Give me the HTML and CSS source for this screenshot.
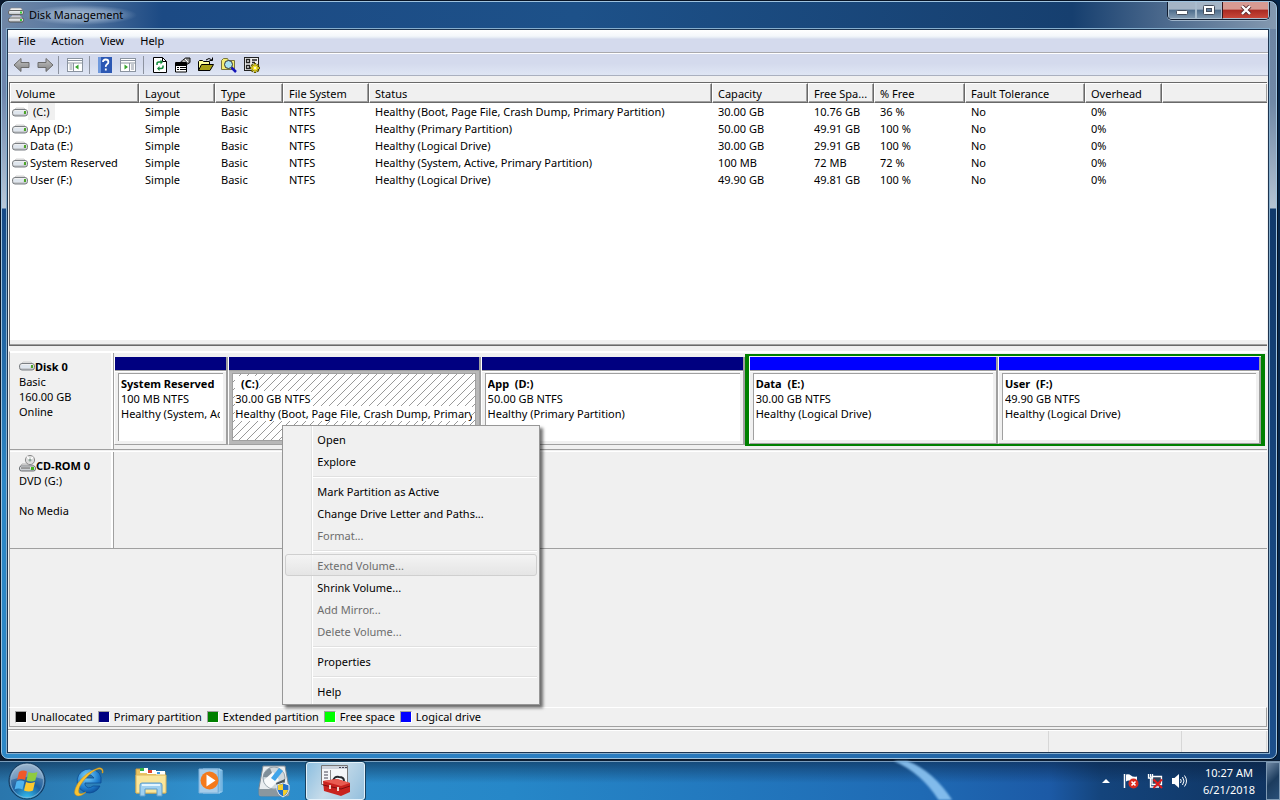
FILE: index.html
```
<!DOCTYPE html>
<html lang="en">
<head>
<meta charset="utf-8">
<title>Disk Management</title>
<link rel="stylesheet" href="styles.css">
</head>
<body>
<svg class="defs" aria-hidden="true">
  <defs>
    <linearGradient id="metal" x1="0" y1="0" x2="0" y2="1"><stop offset="0" stop-color="#fafafa"/><stop offset="1" stop-color="#b9bec4"/></linearGradient>
    <linearGradient id="arrow" x1="0" y1="0" x2="0" y2="1"><stop offset="0" stop-color="#c4c4c4"/><stop offset="1" stop-color="#808080"/></linearGradient>
    <symbol id="drive" viewBox="0 0 16 10">
      <path d="M4 1h8l3 3H1z" fill="#e9e9e9" stroke="#b8b8b8" stroke-width=".6"/>
      <rect x=".5" y="2.500" width="15" height="6.500" rx="2.500" fill="url(#metal)" stroke="#7b7f83"/>
      <rect x="2" y="4" width="9" height="3" fill="#dfe6ee"/>
      <rect x="12" y="4" width="2" height="3" fill="#4ca52a"/>
    </symbol>
    <symbol id="cdrom" viewBox="0 0 17 17">
      <circle cx="11" cy="5" r="4.600" fill="#dcdcdc" stroke="#8a8a8a"/>
      <path d="M11 5L8 1.500M11 5l3-3" stroke="#fff" stroke-width="1.500"/>
      <circle cx="11" cy="5" r="1.500" fill="#8fa39a"/>
      <path d="M3 9h5l2 1h4l2 2H1z" fill="#e6e6e6" stroke="#8a8a8a" stroke-width=".6"/>
      <rect x=".5" y="11" width="16" height="5" rx="2" fill="url(#metal)" stroke="#6f7377"/>
      <path d="M2 13h9" stroke="#555"/><rect x="12" y="12" width="3" height="3" fill="#3eb51c"/>
    </symbol>
  </defs>
</svg>

<main class="window">
  <header class="titlebar">
    <svg class="title-icon" width="16" height="16" viewBox="0 0 16 16" aria-hidden="true"><path d="M3 1h10l2 3H1z" fill="#eee" stroke="#888" stroke-width=".6"/><rect x=".5" y="3.500" width="15" height="4" rx="1.500" fill="url(#metal)" stroke="#666"/><path d="M4 8h8v2H4z" fill="#aab"/><path d="M3 9.500h10l2 2H1z" fill="#eee"/><rect x=".5" y="11" width="15" height="4" rx="1.500" fill="url(#metal)" stroke="#555"/><path d="M12 4.500h2v2h-2zM12 12h2v2h-2z" fill="#3c3"/></svg>
    <h1 class="title">Disk Management</h1>
    <div class="caption">
      <button class="cap cap-min" aria-label="Minimize"><svg width="12" height="6" viewBox="0 0 12 6"><rect x=".5" y="1.500" width="11" height="4" rx="1" fill="#fff" stroke="#444c5a"/></svg></button>
      <button class="cap cap-max" aria-label="Maximize"><svg width="12" height="10" viewBox="0 0 12 10"><rect x=".5" y=".5" width="11" height="9" rx="1" fill="#fff" stroke="#444c5a"/><rect x="3.500" y="3.500" width="5" height="3" fill="#5f7c9c" stroke="#444c5a"/></svg></button>
      <button class="cap cap-close" aria-label="Close"><svg width="12" height="10" viewBox="0 0 12 10"><path d="M2 1l8 8M10 1l-8 8" stroke="#5a2a2e" stroke-width="4"/><path d="M2 1l8 8M10 1l-8 8" stroke="#fff" stroke-width="2.400"/></svg></button>
    </div>
  </header>

  <div class="client">
    <nav class="menubar">
      <button>File</button><button>Action</button><button>View</button><button>Help</button>
    </nav>
    <div class="toolbar">
      <button aria-label="Back"><svg width="18" height="16" viewBox="0 0 18 16"><path d="M1 8l7-6.500v4h8v5H8v4z" fill="url(#arrow)" stroke="#6b6b6b"/></svg></button>
      <button aria-label="Forward"><svg width="18" height="16" viewBox="0 0 18 16"><path d="M17 8l-7-6.500v4H2v5h8v4z" fill="url(#arrow)" stroke="#6b6b6b"/></svg></button>
      <span class="tool-sep first"></span>
      <button aria-label="Show console tree"><svg width="16" height="16" viewBox="0 0 16 16"><rect x=".5" y="1.500" width="15" height="13" fill="#fff" stroke="#8b94a0"/><path d="M1 3.500h14M1 6h14" stroke="#8b94a0"/><path d="M12 2.500h3" stroke="#fff"/><path d="M2.500 8h3M2.500 10h3M2.500 12h3" stroke="#8b94a0"/><path d="M6.500 6v8" stroke="#8b94a0"/><path d="M11.500 7.500v5L8 10z" fill="#37a52c"/></svg></button>
      <span class="tool-sep wide"></span>
      <button aria-label="Help"><svg width="14" height="16" viewBox="0 0 14 16"><rect width="14" height="16" fill="#2c58b4"/><path d="M0 0h3v16H0z" fill="#6e98dd"/><path d="M5 5q0-2.500 2.700-2.500T10.400 5q0 1.300-1.400 2.200T7.800 9.800M7.800 11.500v2" fill="none" stroke="#fff" stroke-width="1.800"/></svg></button>
      <button aria-label="Show action pane"><svg width="16" height="16" viewBox="0 0 16 16"><rect x=".5" y="1.500" width="15" height="13" fill="#fff" stroke="#8b94a0"/><path d="M1 3.500h14M1 6h14" stroke="#8b94a0"/><path d="M12 2.500h3" stroke="#fff"/><path d="M11 8h3M11 10h3M11 12h3" stroke="#8b94a0"/><path d="M9.500 6v8" stroke="#8b94a0"/><path d="M4.500 7.500v5L8 10z" fill="#37a52c"/></svg></button>
      <span class="tool-sep"></span>
      <button aria-label="Refresh"><svg width="14" height="16" viewBox="0 0 14 16"><path d="M.5.5h9l4 4v11H.5z" fill="#fff" stroke="#000"/><path d="M9.500.5v4h4" fill="none" stroke="#000"/><path d="M4 8V6.500Q4 5 6 5h2M10 8.500V10q0 1.500-2 1.500H6" fill="none" stroke="#10893a" stroke-width="1.500"/><path d="M7.500 2.500L10 5 7.500 7.500zM6.500 9L4 11.500 6.500 14z" fill="#10893a"/></svg></button>
      <button aria-label="Properties"><svg width="16" height="16" viewBox="0 0 16 16"><path d="M5.500 5l5-4h4.500v4.500L11 8H6z" fill="#8d8d8d" stroke="#111"/><path d="M8 3.500l3 3M10 2l3 3" stroke="#fff"/><path d="M.5 5.500h11v9.500H.5z" fill="#fff" stroke="#000"/><path d="M1 5h10v4H1z"/><path d="M2 10.500h2M5 10.500h6M2 12.500h2M5 12.500h6" stroke="#000"/></svg></button>
      <button aria-label="Open"><svg width="16" height="16" viewBox="0 0 16 16"><path d="M.5 13.500v-9l1-1h3l1 1h6v3" fill="#ffff9c" stroke="#000"/><path d="M.5 13.500l3-6h12l-3.500 6z" fill="#a8a018" stroke="#000"/><path d="M8 3q3-3 6 0M14.500.5v3h-3" fill="none" stroke="#000"/></svg></button>
      <button aria-label="Find"><svg width="16" height="16" viewBox="0 0 16 16"><path d="M.5 12.500v-9l2-2h4l1 2h6v9z" fill="#f3ed71" stroke="#77753c"/><circle cx="7.500" cy="7.500" r="4" fill="#a8e3f2" stroke="#333"/><path d="M10.500 10.500l4.500 4.500" stroke="#1414b8" stroke-width="2.500"/></svg></button>
      <button aria-label="Settings"><svg width="16" height="16" viewBox="0 0 16 16"><rect x=".5" y=".5" width="14" height="13" fill="#eee" stroke="#222"/><path d="M2.500 2.500h3v3h-3zM2.500 8.500h3v3h-3z" fill="#fff" stroke="#222" stroke-width="1.300"/><path d="M8 3h5M8 5.500h3" stroke="#222" stroke-width="1.500"/><path d="M11 6v10M6 11h10M7.500 7.500l7 7M14.500 7.500l-7 7" stroke="#5e5700" stroke-width="2.400"/><path d="M11 7v8M7 11h8M8.500 8.500l5 5M13.500 8.500l-5 5" stroke="#f5e52c" stroke-width="1.400"/><circle cx="11" cy="11" r="1" fill="#fff"/></svg></button>
    </div>

    <section class="volumes" aria-label="Volumes">
      <table class="volume-table">
        <colgroup><col class="c-volume"><col class="c-layout"><col class="c-type"><col class="c-fs"><col class="c-status"><col class="c-cap"><col class="c-free"><col class="c-pct"><col class="c-fault"><col class="c-over"><col></colgroup>
        <thead><tr><th>Volume</th><th>Layout</th><th>Type</th><th>File System</th><th>Status</th><th>Capacity</th><th>Free Spa...</th><th>% Free</th><th>Fault Tolerance</th><th>Overhead</th><th></th></tr></thead>
        <tbody>
          <tr><td class="vol"><svg class="drive"><use href="#drive"/></svg><span class="vol-name selected">(C:)</span></td><td>Simple</td><td>Basic</td><td>NTFS</td><td>Healthy (Boot, Page File, Crash Dump, Primary Partition)</td><td>30.00 GB</td><td>10.76 GB</td><td>36 %</td><td>No</td><td>0%</td><td></td></tr>
          <tr><td class="vol"><svg class="drive"><use href="#drive"/></svg><span class="vol-name">App (D:)</span></td><td>Simple</td><td>Basic</td><td>NTFS</td><td>Healthy (Primary Partition)</td><td>50.00 GB</td><td>49.91 GB</td><td>100 %</td><td>No</td><td>0%</td><td></td></tr>
          <tr><td class="vol"><svg class="drive"><use href="#drive"/></svg><span class="vol-name">Data (E:)</span></td><td>Simple</td><td>Basic</td><td>NTFS</td><td>Healthy (Logical Drive)</td><td>30.00 GB</td><td>29.91 GB</td><td>100 %</td><td>No</td><td>0%</td><td></td></tr>
          <tr><td class="vol"><svg class="drive"><use href="#drive"/></svg><span class="vol-name">System Reserved</span></td><td>Simple</td><td>Basic</td><td>NTFS</td><td>Healthy (System, Active, Primary Partition)</td><td>100 MB</td><td>72 MB</td><td>72 %</td><td>No</td><td>0%</td><td></td></tr>
          <tr><td class="vol"><svg class="drive"><use href="#drive"/></svg><span class="vol-name">User (F:)</span></td><td>Simple</td><td>Basic</td><td>NTFS</td><td>Healthy (Logical Drive)</td><td>49.90 GB</td><td>49.81 GB</td><td>100 %</td><td>No</td><td>0%</td><td></td></tr>
        </tbody>
      </table>
    </section>

    <section class="disks" aria-label="Disks">
      <div class="disk">
        <div class="disk-info">
          <p class="disk-name"><svg class="drive"><use href="#drive"/></svg><b>Disk 0</b></p>
          <p>Basic</p><p>160.00 GB</p><p>Online</p>
        </div>
        <div class="disk-map">
          <div class="part p-sys"><div class="bar"></div><div class="box"><div class="box-in"><p><b>System Reserved</b></p><p>100 MB NTFS</p><p>Healthy (System, Active, Primary Partition)</p></div></div></div>
          <div class="part p-c active"><div class="bar"></div><div class="box"><div class="box-in"><p><b>&nbsp; (C:)</b></p><p><span>30.00 GB NTFS</span></p><p><span>Healthy (Boot, Page File, Crash Dump, Primary Partition)</span></p></div></div>
            <div class="menu" role="menu">
              <button role="menuitem">Open</button>
              <button role="menuitem">Explore</button>
              <hr>
              <button role="menuitem">Mark Partition as Active</button>
              <button role="menuitem">Change Drive Letter and Paths...</button>
              <button role="menuitem" disabled>Format...</button>
              <hr>
              <button role="menuitem" class="hot" disabled>Extend Volume...</button>
              <button role="menuitem">Shrink Volume...</button>
              <button role="menuitem" disabled>Add Mirror...</button>
              <button role="menuitem" disabled>Delete Volume...</button>
              <hr>
              <button role="menuitem">Properties</button>
              <hr>
              <button role="menuitem">Help</button>
            </div>
          </div>
          <div class="part p-d"><div class="bar"></div><div class="box"><div class="box-in"><p><b>App&nbsp; (D:)</b></p><p>50.00 GB NTFS</p><p>Healthy (Primary Partition)</p></div></div></div>
          <div class="extended">
            <div class="part logical p-e"><div class="bar"></div><div class="box"><div class="box-in"><p><b>Data&nbsp; (E:)</b></p><p>30.00 GB NTFS</p><p>Healthy (Logical Drive)</p></div></div></div>
            <div class="part logical p-f"><div class="bar"></div><div class="box"><div class="box-in"><p><b>User&nbsp; (F:)</b></p><p>49.90 GB NTFS</p><p>Healthy (Logical Drive)</p></div></div></div>
          </div>
        </div>
      </div>
      <div class="disk">
        <div class="disk-info">
          <p class="disk-name"><svg class="cdrom"><use href="#cdrom"/></svg><b>CD-ROM 0</b></p>
          <p>DVD (G:)</p><p>&nbsp;</p><p>No Media</p>
        </div>
        <div class="disk-map"></div>
      </div>
    </section>

    <ul class="legend">
      <li><i class="sw black"></i>Unallocated</li>
      <li><i class="sw navy"></i>Primary partition</li>
      <li><i class="sw green"></i>Extended partition</li>
      <li><i class="sw lime"></i>Free space</li>
      <li><i class="sw blue"></i>Logical drive</li>
    </ul>
    <footer class="statusbar"><span class="st-main"></span><span class="st-mid"></span><span class="st-end"></span></footer>
  </div>
</main>

<footer class="taskbar">
  <svg class="streak" viewBox="0 0 80 40" aria-hidden="true"><path d="M10 0Q38 12 56 40h14Q50 10 24 0z" fill="#8cc4f2" opacity=".9"/></svg>
  <button class="start" aria-label="Start"><svg width="38" height="38" viewBox="0 0 38 38">
    <defs><radialGradient id="orb" cx=".5" cy="1" r="1"><stop offset="0" stop-color="#35c6f5"/><stop offset=".45" stop-color="#1c5e9e"/><stop offset="1" stop-color="#7f9fbd"/></radialGradient></defs>
    <circle cx="19" cy="19" r="18" fill="url(#orb)" stroke="#123556"/><circle cx="19" cy="19" r="16.500" fill="none" stroke="#8db4d2" opacity=".7"/>
    <path d="M3 18a16 16 0 0132-1Q19 12 3 18z" fill="#fff" opacity=".25"/>
    <path d="M11 10q4-2.500 8-.5l-2 8.500q-4-2-8 0z" fill="#f0582a"/><path d="M20.500 10q4 2 9 0l-2.200 8.500q-4 2-8.800 0z" fill="#8fcb3e"/><path d="M8.500 19.500q4-2 8 0l-2 8q-4-2-8 0z" fill="#4fb3f0"/><path d="M18 20q4 2 9 0l-2 8.500q-4 2-9 0z" fill="#fdc92f"/></svg></button>
  <button class="task" aria-label="Internet Explorer"><svg width="34" height="34" viewBox="0 0 34 34">
    <defs><radialGradient id="ie" cx=".4" cy=".3" r=".8"><stop offset="0" stop-color="#7cd3fb"/><stop offset=".6" stop-color="#2180cf"/><stop offset="1" stop-color="#0b438c"/></radialGradient></defs>
    <path d="M17.500 5A12 12 0 1028 22h-7q-5 4-8-1v-2h16Q31 6 17.500 5zM13 14q4-7 9 0z" fill="url(#ie)" fill-rule="evenodd" stroke="#0d4e96" stroke-width=".8"/>
    <path d="M31 9q1-6-5-5Q14 8 6 19-1 31 6 32q4 0 8-4-5 3-7 1-2-5 6-14Q21 6 27 5q4 0 3 4z" fill="#f8c332" stroke="#c98a12" stroke-width=".5"/></svg></button>
  <button class="task" aria-label="Windows Explorer"><svg width="34" height="32" viewBox="0 0 34 32"><path d="M2 4h9l2 3h18v21H2z" fill="#eac565" stroke="#c79a3c"/><path d="M6 3h8v5H6z" fill="#fff"/><path d="M6 3h4v3H6z" fill="#30b045"/><path d="M13 5h9v4h-9z" fill="#fff"/><path d="M14 5h4v3h-4z" fill="#df4431"/><path d="M22 6h9v4h-9z" fill="#fff"/><path d="M23 7h3v2h-3z" fill="#3e9be0"/><path d="M2 10h30v18H2z" fill="#fae69b" stroke="#ddb65a"/><path d="M6 31V20q0-2 2-2h18q2 0 2 2v11h-5v-7H11v7z" fill="#9fd0f0" stroke="#5c9ccb"/><path d="M8 19h18v2H8z" fill="#e3f5ff"/></svg></button>
  <button class="task" aria-label="Media Player"><svg width="30" height="28" viewBox="0 0 30 28"><path d="M8 3h16v22H8z" fill="#4c9ad3" stroke="#9fd0f0"/><path d="M5 2h17v24H5z" fill="#6cb0de" stroke="#a9d6f2"/><path d="M1 2h19v24H1z" fill="#a7cdea" stroke="#7db2dc"/><circle cx="11.500" cy="13.500" r="9" fill="#f47a1c"/><path d="M8.500 7.500v12l9-6z" fill="#fff"/></svg></button>
  <button class="task" aria-label="Partition tool"><svg width="34" height="34" viewBox="0 0 34 34"><path d="M5 2h22l4 22v6q0 2-2 2H3q-2 0-2-2v-6z" fill="#e9edf0" stroke="#7b8791"/><path d="M1 25h30v5q0 2-2 2H3q-2 0-2-2z" fill="#8b979f"/><circle cx="16" cy="14" r="11" fill="#cfd8de" stroke="#9aa5ad"/><path d="M16 14L5 13q1-6 7-9z" fill="#7f8e99"/><path d="M6 16l9-8 6 8-8 8q-6-2-7-8z" fill="#f8fafb"/><path d="M13 14l8-10 4 3-8 10z" fill="#3fa4ea"/><path d="M18 19l9-4q0 7-7 9z" fill="#49545c"/><path d="M25 19l6 2v5q-1 5-6 7-5-2-6-7v-5z" fill="#2470c8" stroke="#e8eef5"/><path d="M25 20v6h5q-1 4-5 6v-6h-5v-5z" fill="#f7cf2c"/></svg></button>
  <button class="task running" aria-label="Disk Management"><svg width="34" height="34" viewBox="0 0 34 34"><path d="M2.500 1.500h26v19h-26z" fill="#f4f6f8" stroke="#777"/><path d="M3 2h25v3H3z" fill="#cdd3dc"/><path d="M20 3.500h2M23 3.500h2M26 3.500h2M5 8h4M5 11h4M5 14h4" stroke="#445" /><path d="M11.500 6v14" stroke="#888"/><path d="M14 17q1-5 6-4 5 0 5 4" fill="none" stroke="#26292d" stroke-width="2"/><path d="M4 17l14-2 13 4v9l-9 4L5 27z" fill="#c9231e"/><path d="M4 17l14-2 13 4-9 3z" fill="#e95b50"/><path d="M4 21l18 4 9-3" fill="none" stroke="#7d0e10"/><path d="M10 21h2v4h-2zM18 23h2v4h-2z" fill="#f1d3c9"/></svg></button>
  <div class="tray">
    <svg width="8" height="4" viewBox="0 0 8 4" aria-hidden="true"><path d="M0 4l4-4 4 4z" fill="#fff"/></svg>
    <svg width="16" height="16" viewBox="0 0 16 16" aria-label="Action Center"><path d="M1.500 1v14" stroke="#fff" stroke-width="1.500"/><path d="M3 1.500q3-1 5 1t6 1v6q-4 1-6-1t-5 0z" fill="#fff"/><circle cx="10.500" cy="10.500" r="5" fill="#d92b1e"/><path d="M8.500 8.500l4 4M12.500 8.500l-4 4" stroke="#fff" stroke-width="1.600"/></svg>
    <svg width="16" height="16" viewBox="0 0 16 16" aria-label="Network"><path d="M5 3.500h9.500v8H5z" fill="#31445c" stroke="#fff" stroke-width="1.300"/><path d="M1.500 1v4h4V1M3.500 5v9H12M3.500 1v3" fill="none" stroke="#fff" stroke-width="1.300"/><path d="M6.500 6.500l8.500 8.500M15 6.500L6.500 15" stroke="#e01b1b" stroke-width="2"/></svg>
    <svg width="16" height="16" viewBox="0 0 16 16" aria-label="Volume"><path d="M1 5h2.500L8 1v14l-4.500-4H1z" fill="#fff"/><path d="M9.500 6q1.500 2 0 4M11.500 4q3 4 0 8M13.500 2.500q4 5.500 0 11" fill="none" stroke="#fff"/></svg>
    <div class="clock"><span>10:27 AM</span><span>6/21/2018</span></div>
  </div>
  <button class="peek" aria-label="Show desktop"></button>
</footer>
</body>
</html>
```
FILE: styles.css
```
* { box-sizing: border-box; }
body {
  margin: 0;
  min-height: 100vh;
  display: flex;
  flex-direction: column;
  background: linear-gradient(90deg, #0a1a30 0, #14467c 40%, #06264a 100%);
  font: 11px/15px "Noto Sans", "Open Sans", sans-serif;
  color: #000;
}
button { font: inherit; color: inherit; border: 0; background: none; padding: 0; margin: 0; }
svg { display: block; flex: none; }
p { margin: 0; white-space: pre; }
.defs { position: absolute; width: 0; height: 0; }

.window {
  flex: 1;
  display: flex;
  flex-direction: column;
  margin: 1px 3px 1px 1px;
  border: 1px solid #9fc3df;
  border-radius: 7px;
  background:
    linear-gradient(90deg, #6f86a6 0, #56769f 70px, #1c4a84 160px, #1d5189 45%, #163f6f 84%, #4a688c 91%, #8499b0 100%) top / 100% 27px no-repeat,
    linear-gradient(#6e86ad 0, #6e86ad 90px, #b8c8d8 206px, #174a86 207px, #2d87c6 480px, #2d87c6) left / 5px 100% no-repeat,
    linear-gradient(#6c84a2 0, #7088a6 100px, #b5c3d2 206px, #10396b 207px, #1c4f8c) right / 7px 100% no-repeat,
    linear-gradient(90deg, #2f8bc9, #2a7cc0 50%, #1b4f8c);
  box-shadow: 0 0 0 1px #081425;
}
.titlebar { display: flex; height: 27px; padding: 0 6px; }
.title-icon { margin-top: 5px; }
.title {
  margin: 3px 0 0 1px;
  padding: 0 14px 0 4px;
  height: 20px;
  font-size: 11px;
  line-height: 20px;
  font-weight: 400;
  background: radial-gradient(closest-side, rgba(190, 208, 228, .75), rgba(190, 208, 228, .45) 60%, transparent);
}
.caption { display: flex; height: 18px; margin-left: auto; border: 1px solid #101c30; border-top: 0; border-radius: 0 0 5px 5px; overflow: hidden; box-shadow: 0 1px 0 #9db3c9; }
.cap { display: flex; align-items: center; justify-content: center; border: 1px solid #a9bccd; border-top: 0; background: linear-gradient(#a5b5c6 0 45%, #4e6d8c 50%, #8199b0); }
.cap-min { width: 28px; padding-top: 3px; }
.cap-max { width: 26px; }
.cap-close { width: 47px; background: linear-gradient(#d79a92 0 45%, #a92a22 50%, #c8473a); border-left: 1px solid #35141a; }

.client { flex: 1; display: flex; flex-direction: column; margin: 0 7px 5px 5px; border: 1px solid #1c3450; box-shadow: 0 0 0 1px #86aecd; background: #f0f0f0; }
.menubar { display: flex; height: 23px; padding-left: 2px; border-bottom: 1px solid #a9a9ad; background: linear-gradient(#fff 0, #f4f7fb 6px, #e2e8f3 8px, #d4daed 9px); line-height: 22px; }
.menubar button { padding: 0 8px; }
.toolbar { display: flex; align-items: center; height: 23px; padding-left: 2px; border-top: 1px solid #fff; border-bottom: 1px solid #aab0bf; background: linear-gradient(#d4daed 45%, #dfe6f4); }
.toolbar button { display: flex; justify-content: center; width: 23px; }
.tool-sep { width: 1px; height: 18px; margin: 0 4px; background: #8d93a0; }
.tool-sep.first { margin-left: 2px; }
.tool-sep.wide { margin: 0 3px; }

.volumes { flex: none; height: 264px; margin: 6px 1px 0; border-top: 1px solid #696969; border-left: 1px solid #696969; border-bottom: 1px solid #696969; background: #fff; box-shadow: inset 0 -1px #a0a0a0, inset 0 -5px #f0f0f0; overflow: hidden; }
.volume-table { width: 100%; table-layout: fixed; border-collapse: separate; border-spacing: 0; }
.c-volume { width: 129px; } .c-layout { width: 76px; } .c-type { width: 68px; } .c-fs { width: 86px; } .c-status { width: 343px; }
.c-cap { width: 96px; } .c-free { width: 66px; } .c-pct { width: 91px; } .c-fault { width: 120px; } .c-over { width: 77px; }
th, td { padding: 0 0 0 6px; text-align: left; font-weight: 400; white-space: nowrap; overflow: hidden; }
th { height: 20px; padding-left: 5px; background: #f0f0f0; border-left: 1px solid #fff; border-top: 1px solid #fff; border-right: 1px solid #696969; border-bottom: 1px solid #696969; box-shadow: inset -1px -1px #a0a0a0; }
th:last-child { border-right: 0; }
td { height: 17px; line-height: 17px; }
.vol { padding-left: 2px; }
.drive { display: inline-block; width: 16px; height: 10px; vertical-align: -1px; }
.vol-name { display: inline-block; height: 17px; padding-left: 2px; }
.selected { padding: 0 5px; background: #f0f0f0; }

.disks { flex: 1; margin: 5px 1px 0; border-left: 1px solid #a0a0a0; border-top: 1px solid #fff; }
.disk { display: flex; height: 98px; border-bottom: 1px solid #a0a0a0; margin-bottom: 1px; border-top: 1px solid #fff; }
.disk-info { width: 104px; flex: none; padding: 5px 0 0 9px; border-right: 1px solid #a0a0a0; box-shadow: inset -2px 0 #fff; }
.disk-name { display: flex; align-items: center; height: 16px; }
.cdrom { width: 17px; height: 17px; margin-top: -4px; }
.disk-map { flex: 1; display: flex; min-width: 0; padding: 1px 2px 3px 0; }
.part { position: relative; display: flex; flex-direction: column; min-width: 0; margin: 3px 0 1px; border-left: 1px solid #fff; border-right: 2px solid #a0a0a0; border-bottom: 1px solid #a0a0a0; }
.p-sys { flex: 113; } .p-c { flex: 253; } .p-d { flex: 265; } .p-e { flex: 249; } .p-f { flex: 263; }
.bar { height: 14px; background: #000080; border-bottom: 1px solid #a0a0a0; }
.logical .bar { background: #0000ff; }
.box { flex: 1; min-height: 0; padding: 1px 3px 3px; border-top: 1px solid #fff; background: #f0f0f0; }
.box-in { height: 100%; padding: 2px 3px 0 2px; border-top: 1px solid #a0a0a0; border-left: 1px solid #a0a0a0; background: #fff; overflow: hidden; }
.box-in p { overflow: hidden; }
.active .box { background: #b8b8b8; border-color: #b8b8b8; }
.active .box-in { border: 1px solid #a0a0a0; background: #fff linear-gradient(to bottom right, transparent 44%, #999 50%, transparent 56%) 0 0 / 8px 8px; }
.active b, .active .box-in span { background: #fff; }
.extended { flex: 520; display: flex; min-width: 0; border: solid #008000; border-width: 2px 4px; }
.extended .part { margin: 1px 0 0; }

.menu { position: absolute; z-index: 2; left: 53px; top: 68px; width: 258px; padding: 2px; border: 1px solid #979797; background: linear-gradient(90deg, #f1f1f1 28px, #e2e3e3 28px 29px, #fff 29px 30px, #f0f0f0 30px); background-clip: padding-box; box-shadow: 3px 3px 3px rgba(0, 0, 0, .55); }
.menu button { display: block; width: 100%; height: 22px; padding-left: 32px; text-align: left; }
.menu button:disabled { color: #6d6d6d; }
.menu .hot { border: 1px solid #cfcfcf; border-radius: 3px; padding-left: 31px; background: linear-gradient(rgba(245, 245, 245, .7), rgba(226, 226, 226, .8)); }
.menu hr { height: 2px; margin: 4px 0 2px 28px; border: 0; border-top: 1px solid #e0e0e0; background: #fff; }

.legend { display: flex; gap: 5px; height: 20px; margin: 0 1px; padding: 0 0 0 5px; list-style: none; border: 1px solid #a0a0a0; border-top-color: #fff; line-height: 18px; }
.legend li { display: flex; align-items: center; gap: 4px; }
.sw { width: 12px; height: 12px; border: 1px solid #a0a0a0; border-right-color: #fff; border-bottom-color: #fff; }
.black { background: #000; } .navy { background: #000080; } .green { background: #008000; } .lime { background: #00ff00; } .blue { background: #0000ff; }
.statusbar { display: flex; height: 23px; margin-top: 2px; border-top: 1px solid #a0a0a0; box-shadow: inset 0 1px #fff; }
.statusbar span { border-right: 1px solid #d7d7d7; margin-top: 1px; }
.st-main { flex: 1; } .st-mid { width: 133px; } .st-end { width: 85px; margin-right: 1px; }

.taskbar {
  position: relative;
  display: flex;
  align-items: center;
  height: 40px;
  border-top: 1px solid #0b1d33;
  box-shadow: inset 0 1px rgba(190, 215, 235, .6);
  background:
    linear-gradient(rgba(8, 30, 60, .55), rgba(8, 30, 60, .2) 14px, transparent 22px),
    linear-gradient(90deg, #2a76ac 0, #2f8fcc 16%, #2687c8 40%, #1f6ab4 72%, #1c5aa6 82%, #14447c 86%, #0f335f 100%);
}
.streak { position: absolute; left: 69%; top: 0; width: 80px; height: 39px; filter: blur(1px); }
.start { width: 54px; padding-left: 8px; }
.task { display: flex; align-items: center; justify-content: center; width: 61px; height: 38px; margin-left: 1px; }
.start + .task { margin-left: 4px; }
.running { width: 59px; border: 1px solid #e3f1fa; border-radius: 3px; box-shadow: 0 0 0 1px #16405f; background: linear-gradient(120deg, #8dbfe0, #c7dcea 45%, #93bfdd); }
.tray { display: flex; align-items: center; gap: 8px; margin-left: auto; }
.tray svg:first-child { margin-right: 5px; }
.clock { display: flex; flex-direction: column; align-items: center; width: 68px; color: #fff; line-height: 17px; }
.peek { width: 14px; height: 38px; margin-left: 3px; border: 1px solid #7f9ab4; background: linear-gradient(135deg, #7089a4, #1c3c5e 50%, #2a5078); }
```
